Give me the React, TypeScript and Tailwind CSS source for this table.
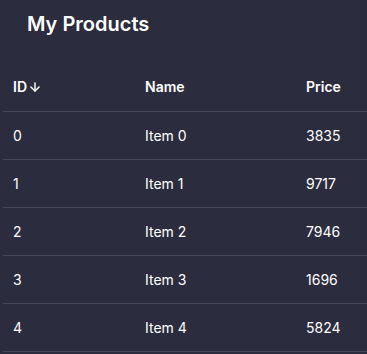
import { ArrowDown } from "lucide-react";

const products = [
  { id: 0, name: "Item 0", price: 3835 },
  { id: 1, name: "Item 1", price: 9717 },
  { id: 2, name: "Item 2", price: 7946 },
  { id: 3, name: "Item 3", price: 1696 },
  { id: 4, name: "Item 4", price: 5824 },
];

export default function App() {
  return (
    <div className="w-full h-screen overflow-hidden bg-[#2b2c3e] text-white font-['Inter',sans-serif]">
      <h2 className="h-[63px] pl-[27px] pt-[12px] text-[20px] leading-[24px] font-semibold">My Products</h2>
      <table className="ml-[3px] w-[364px] border-collapse text-[14px] table-fixed">
        <colgroup>
          <col className="w-[132px]" />
          <col className="w-[161px]" />
          <col className="w-[71px]" />
        </colgroup>
        <thead>
          <tr className="h-[48px] border-b border-[#46475a]">
            <th className="px-[10px] text-left font-semibold">
              <span className="flex items-center gap-[1px]">
                ID
                <ArrowDown size={14} strokeWidth={2.5} />
              </span>
            </th>
            <th className="px-[10px] text-left font-semibold">Name</th>
            <th className="px-[10px] text-left font-semibold">Price</th>
          </tr>
        </thead>
        <tbody>
          {products.map((p) => (
            <tr key={p.id} className="h-[48px] border-b border-[#46475a]">
              <td className="px-[10px]">{p.id}</td>
              <td className="px-[10px]">{p.name}</td>
              <td className="px-[10px]">{p.price}</td>
            </tr>
          ))}
        </tbody>
      </table>
    </div>
  );
}
